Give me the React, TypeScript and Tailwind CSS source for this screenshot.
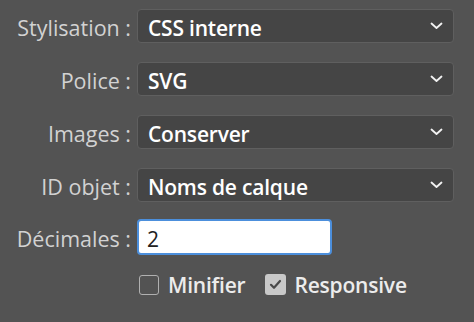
const font = { fontFamily: '"Open Sans", "Liberation Sans", sans-serif' }

const Chevron = () => (
  <svg width="13" height="8" viewBox="0 0 13 8" fill="none">
    <path d="M1.5 1.5 L6.5 6 L11.5 1.5" stroke="#f2f2f2" strokeWidth="1.8" strokeLinecap="round" strokeLinejoin="round" />
  </svg>
)

const Select = ({ value }: { value: string }) => (
  <div className="flex h-[34px] items-center justify-between rounded-[4px] border border-[#5f5f5f] bg-[#454545] pl-[10px] pr-[10px]">
    <span className="pt-[3px] text-[21px] leading-[26px] font-semibold tracking-[-0.2px] text-white">{value}</span>
    <Chevron />
  </div>
)

const Row = ({ label, children }: { label: string; children: React.ReactNode }) => (
  <div className="grid grid-cols-[131px_1fr] items-center gap-[6px]">
    <span className="whitespace-nowrap pt-[3px] text-right text-[21.5px] leading-[26px] text-[#d2d2d2]">{label}</span>
    {children}
  </div>
)

const App = () => {
  return (
    <div className="h-[322px] w-[474px] overflow-hidden bg-[#535353] pr-[20px] pt-[9px]" style={font}>
      <div className="flex flex-col gap-[19px]">
        <Row label="Stylisation :">
          <Select value="CSS interne" />
        </Row>
        <Row label="Police :">
          <Select value="SVG" />
        </Row>
        <Row label="Images :">
          <Select value="Conserver" />
        </Row>
        <Row label="ID objet :">
          <Select value="Noms de calque" />
        </Row>
        <div className="-mt-[2px]">
          <Row label="Décimales :">
            <div className="flex h-[36px] w-[195px] items-center rounded-[4px] border-2 border-[#4c8fdc] bg-white pl-[8px]">
              <span className="pt-[3px] text-[21px] leading-[26px] text-[#222]">2</span>
            </div>
          </Row>
        </div>
      </div>
      <div className="ml-[139px] mt-[19px] flex h-[21px] items-center">
        <div className="flex items-center gap-[9px]">
          <div className="h-[20px] w-[20px] rounded-[3px] border-[1.5px] border-[#b0b0b0]" />
          <span className="pt-[2px] text-[21px] leading-[21px] font-semibold tracking-[-0.2px] text-[#ececec]">Minifier</span>
        </div>
        <div className="ml-[20px] flex items-center gap-[8px]">
          <div className="flex h-[21px] w-[21px] items-center justify-center rounded-[3px] bg-[#c9c9c9]">
            <svg width="13" height="11" viewBox="0 0 13 11" fill="none">
              <path d="M2 5.8 L5 8.8 L11 2" stroke="#4a4a4a" strokeWidth="2.2" strokeLinecap="round" strokeLinejoin="round" />
            </svg>
          </div>
          <span className="pt-[2px] text-[21px] leading-[21px] font-semibold tracking-[-0.2px] text-[#ececec]">Responsive</span>
        </div>
      </div>
    </div>
  )
}

export default App
